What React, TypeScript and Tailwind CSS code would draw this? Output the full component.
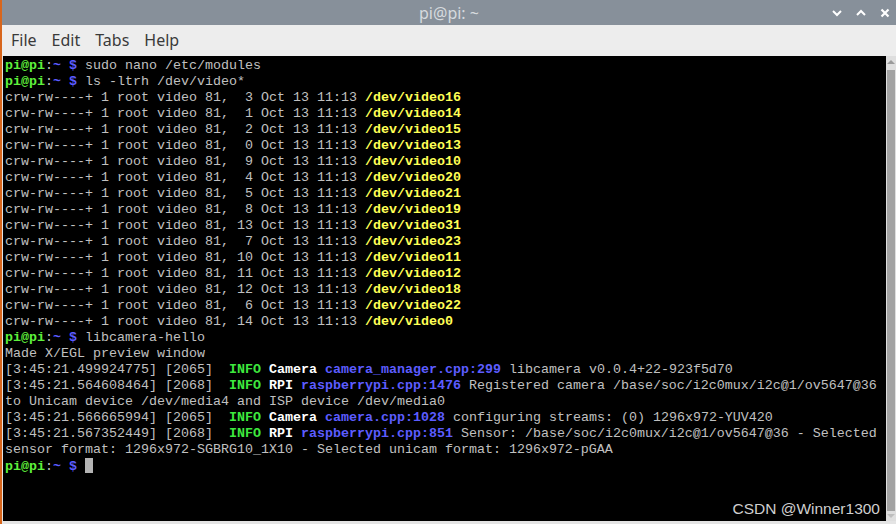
import React from "react";

type Seg = [string, string];

const G = "text-[#5ff03c] font-bold";
const B = "text-[#5c5cff] font-bold";
const N = "text-[#c0c0c0]";
const Y = "text-[#ffff55] font-bold";
const W = "text-white font-bold";
const IG = "text-[#3ee83e] font-bold";

const prompt = (cmd: string): Seg[] => [
  ["pi@pi", G],
  [":", N],
  ["~ $", B],
  [" " + cmd, N],
];

const devs: [string, string][] = [
  [" 3", "16"],
  [" 1", "14"],
  [" 2", "15"],
  [" 0", "13"],
  [" 9", "10"],
  [" 4", "20"],
  [" 5", "21"],
  [" 8", "19"],
  ["13", "31"],
  [" 7", "23"],
  ["10", "11"],
  ["11", "12"],
  ["12", "18"],
  [" 6", "22"],
  ["14", "0"],
];

const lines: Seg[][] = [
  prompt("sudo nano /etc/modules"),
  prompt("ls -ltrh /dev/video*"),
  ...devs.map(([m, v]): Seg[] => [
    [`crw-rw----+ 1 root video 81, ${m} Oct 13 11:13 `, N],
    [`/dev/video${v}`, Y],
  ]),
  prompt("libcamera-hello"),
  [["Made X/EGL preview window", N]],
  [
    ["[3:45:21.499924775] [2065]  ", N],
    ["INFO ", IG],
    ["Camera ", W],
    ["camera_manager.cpp:299", B],
    [" libcamera v0.0.4+22-923f5d70", N],
  ],
  [
    ["[3:45:21.564608464] [2068]  ", N],
    ["INFO ", IG],
    ["RPI ", W],
    ["raspberrypi.cpp:1476", B],
    [" Registered camera /base/soc/i2c0mux/i2c@1/ov5647@36", N],
  ],
  [["to Unicam device /dev/media4 and ISP device /dev/media0", N]],
  [
    ["[3:45:21.566665994] [2065]  ", N],
    ["INFO ", IG],
    ["Camera ", W],
    ["camera.cpp:1028", B],
    [" configuring streams: (0) 1296x972-YUV420", N],
  ],
  [
    ["[3:45:21.567352449] [2068]  ", N],
    ["INFO ", IG],
    ["RPI ", W],
    ["raspberrypi.cpp:851", B],
    [" Sensor: /base/soc/i2c0mux/i2c@1/ov5647@36 - Selected", N],
  ],
  [["sensor format: 1296x972-SGBRG10_1X10 - Selected unicam format: 1296x972-pGAA", N]],
];

export default function App() {
  return (
    <div className="w-[896px] h-[524px] flex bg-[#d8661c] overflow-hidden">
      <div className="w-[2px] shrink-0" />
      <div className="flex-1 flex flex-col">
        {/* Title bar */}
        <div className="h-[25px] bg-[#87909a] relative flex items-center justify-center shrink-0">
          <span
            className="text-[16px] text-[#d6dade] leading-none"
            style={{ fontFamily: '"Noto Sans", "Liberation Sans", sans-serif' }}
          >
            pi@pi: ~
          </span>
          <div className="absolute right-[6px] top-0 h-[25px] flex items-center gap-[14px]">
            <svg width="10" height="8" viewBox="0 0 10 8">
              <path d="M1 2 L5 6 L9 2" stroke="#ffffff" strokeWidth="2" fill="none" />
            </svg>
            <svg width="10" height="8" viewBox="0 0 10 8">
              <path d="M1 6 L5 2 L9 6" stroke="#ffffff" strokeWidth="2" fill="none" />
            </svg>
            <svg width="10" height="10" viewBox="0 0 10 10">
              <path d="M1.5 1.5 L8.5 8.5 M8.5 1.5 L1.5 8.5" stroke="#ffffff" strokeWidth="2.2" fill="none" />
            </svg>
          </div>
        </div>
        {/* Menu bar */}
        <div
          className="h-[31px] bg-[#ededed] flex items-center gap-[15px] pl-[9px] pb-[1px] text-[16px] text-[#3a3a3a] shrink-0"
          style={{ fontFamily: '"Noto Sans", "Liberation Sans", sans-serif' }}
        >
          <span>File</span>
          <span>Edit</span>
          <span>Tabs</span>
          <span>Help</span>
        </div>
        {/* Body */}
        <div className="flex-1 flex bg-[#e4e4e4] pl-[1px] pb-[3px] min-h-0">
          <div
            className="flex-1 bg-black relative pl-[2px] pt-[2px] text-[13.33px] leading-[16px] whitespace-pre overflow-hidden"
            style={{ fontFamily: '"Liberation Mono", "DejaVu Sans Mono", monospace' }}
          >
            {lines.map((segs, i) => (
              <div key={i} className="h-[16px]">
                {segs.map(([t, c], j) => (
                  <span key={j} className={c}>
                    {t}
                  </span>
                ))}
              </div>
            ))}
            <div className="h-[16px]">
              <span className={G}>pi@pi</span>
              <span className={N}>:</span>
              <span className={B}>~ $</span>
              <span className={N}> </span>
              <span className="inline-block w-[8px] h-[15px] align-[-3px] bg-[#b4b4b4]" />
            </div>
            <div
              className="absolute right-[6px] bottom-[5px] text-[15.5px] text-[#cfcfcf] leading-none"
              style={{ fontFamily: '"Liberation Sans", Arial, sans-serif' }}
            >
              CSDN @Winner1300
            </div>
          </div>
          <div className="w-[10px] bg-[#dedede] flex flex-col items-center shrink-0">
            <svg width="8" height="6" viewBox="0 0 8 6" className="mt-[3px]">
              <path d="M0 5 L4 1 L8 5 Z" fill="#9a9a9a" />
            </svg>
            <div className="w-[8px] flex-1 bg-[#a2a2a2] mt-[5px] mb-[2px]" />
            <svg width="8" height="6" viewBox="0 0 8 6" className="mb-[2px]">
              <path d="M0 1 L4 5 L8 1 Z" fill="#bdbdbd" />
            </svg>
          </div>
        </div>
      </div>
    </div>
  );
}
